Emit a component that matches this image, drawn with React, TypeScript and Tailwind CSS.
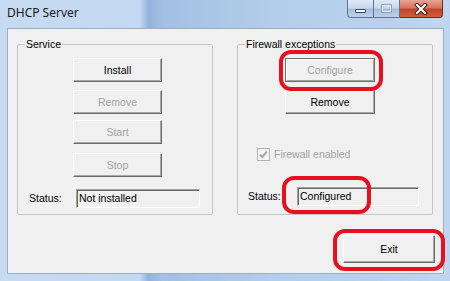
import React from "react";

const font = { fontFamily: '"Liberation Sans", Arial, sans-serif' };

function Btn({
  label,
  disabled,
  className = "",
  strong,
}: {
  label: string;
  disabled?: boolean;
  className?: string;
  strong?: boolean;
}) {
  return (
    <div
      className={`flex items-center justify-center border ${
        strong
          ? "border-[#6f6f6f]"
          : "border-t-white border-l-white border-r-[#6b6b6b] border-b-[#6b6b6b]"
      } bg-[#f0f0f0] shadow-[inset_-1px_-1px_0_#a8a8a8] text-[10.5px] leading-none ${
        disabled ? "text-[#a3a3a3]" : "text-black"
      } ${className}`}
    >
      {strong ? (
        <div className="flex h-full w-full items-center justify-center border border-t-white border-l-white border-r-[#a0a0a0] border-b-[#a0a0a0]">
          {label}
        </div>
      ) : (
        label
      )}
    </div>
  );
}

function TextBox({ text, className = "" }: { text: string; className?: string }) {
  return (
    <div
      className={`flex h-[19px] items-center border border-t-[#a0a0a0] border-l-[#a0a0a0] border-r-white border-b-white bg-[#f0f0f0] pl-[2px] text-[10.5px] leading-none text-black shadow-[inset_1px_1px_0_#696969] ${className}`}
    >
      {text}
    </div>
  );
}

function Group({
  title,
  children,
  className = "",
}: {
  title: string;
  children: React.ReactNode;
  className?: string;
}) {
  return (
    <div
      className={`relative h-[171px] w-[196px] rounded-[2px] border border-[#c6c6c6] ${className}`}
    >
      <div className="absolute left-[7px] top-[-7px] bg-[#f0f0f0] px-[1px] text-[10.5px] leading-[12px] text-black">
        {title}
      </div>
      {children}
    </div>
  );
}

function RedMark({ className }: { className: string }) {
  return (
    <div
      className={`pointer-events-none absolute rounded-[12px] border-[4px] border-[#e8101e] ${className}`}
    />
  );
}

export default function App() {
  return (
    <div
      className="relative h-[281px] w-[450px] overflow-hidden bg-[linear-gradient(90deg,#c6dbf2_0%,#c3d9f1_31%,#93b3da_33%,#a2c0e3_36%,#b3cdea_60%,#b9d1ed_85%,#c0d6f0_100%)]"
      style={font}
    >
      {/* Title bar */}
      <div className="flex h-[28px] items-start">
        <div
          className="pl-[7px] pt-[5px] text-[12px] leading-[16px] text-[#1a1a1a]"
          style={{ fontFamily: '"Noto Sans", "Open Sans", sans-serif' }}
        >
          DHCP Server
        </div>
        <div className="ml-auto mr-[7px] flex h-[18px]">
          <div className="flex w-[27px] items-center justify-center rounded-bl-[4px] border border-t-0 border-[#5e7693] bg-[linear-gradient(180deg,#dfe9f5_0%,#c9d9ec_45%,#a9c0dc_55%,#bcd0e8_100%)]">
            <div className="mt-[5px] h-[4px] w-[11px] rounded-[1px] border border-[#3a4a5e] bg-white" />
          </div>
          <div className="flex w-[26px] items-center justify-center border-b border-r border-[#5e7693] bg-[linear-gradient(180deg,#dfe9f5_0%,#c9d9ec_45%,#a9c0dc_55%,#bcd0e8_100%)]">
            <div className="h-[9px] w-[11px] border border-[#8fa2b8] shadow-[inset_0_0_0_1px_#e6eef7]" />
          </div>
          <div className="flex w-[43px] items-center justify-center rounded-br-[4px] border-b border-r border-[#6b2a22] bg-[linear-gradient(180deg,#e7a492_0%,#d7765f_45%,#c2412a_55%,#d45f3c_100%)]">
            <svg width="14" height="12" viewBox="0 0 14 12">
              <path
                d="M3 2 L11 10 M11 2 L3 10"
                stroke="#3b1a14"
                strokeWidth="4"
                strokeLinecap="square"
              />
              <path
                d="M3 2 L11 10 M11 2 L3 10"
                stroke="#ffffff"
                strokeWidth="2.2"
                strokeLinecap="square"
              />
            </svg>
          </div>
        </div>
      </div>

      {/* Client area */}
      <div className="mx-[7px] flex h-[246px] w-[437px] flex-col border border-[#9aaec6] bg-[#f0f0f0]">
        <div className="mt-[15px] flex gap-[24px] pl-[9px]">
          <Group title="Service">
            <div className="flex flex-col items-start pl-[55px] pt-[13px]">
              <Btn label="Install" className="h-[24px] w-[89px]" />
              <Btn label="Remove" disabled className="mt-[8px] h-[24px] w-[89px]" />
              <Btn label="Start" disabled className="mt-[6px] h-[24px] w-[89px]" />
              <Btn label="Stop" disabled className="mt-[9px] h-[24px] w-[89px]" />
            </div>
            <div className="mt-[12px] flex items-center pl-[11px] text-[10.5px] leading-none text-black">
              <div className="w-[47px]">Status:</div>
              <TextBox text="Not installed" className="w-[124px]" />
            </div>
          </Group>
          <Group title="Firewall exceptions">
            <div className="flex flex-col items-start pl-[47px] pt-[13px]">
              <Btn label="Configure" disabled strong className="h-[24px] w-[90px]" />
              <Btn label="Remove" className="mt-[8px] h-[24px] w-[90px]" />
            </div>
            <div className="mt-[34px] flex items-center pl-[19px] text-[10.5px] leading-none text-[#a3a3a3]">
              <svg width="13" height="13" viewBox="0 0 13 13">
                <rect x="0.5" y="0.5" width="12" height="12" fill="#f4f4f4" stroke="#b4b4b4" />
                <path d="M3 6.5 L5.3 9 L10 3.5" stroke="#a6a6a6" strokeWidth="2" fill="none" />
              </svg>
              <span className="ml-[4px]">Firewall enabled</span>
            </div>
            <div className="mt-[26px] flex items-center pl-[10px] text-[10.5px] leading-none text-black">
              <div className="w-[49px]">Status:</div>
              <TextBox text="Configured" className="w-[122px]" />
            </div>
          </Group>
        </div>
        <div className="mr-[8px] mt-[20px] flex justify-end">
          <Btn label="Exit" className="h-[28px] w-[92px]" />
        </div>
      </div>

      {/* Red annotation marks */}
      <RedMark className="left-[279px] top-[50px] h-[41px] w-[104px]" />
      <RedMark className="left-[282px] top-[176px] h-[38px] w-[89px]" />
      <RedMark className="left-[333px] top-[229px] h-[42px] w-[112px]" />
    </div>
  );
}
